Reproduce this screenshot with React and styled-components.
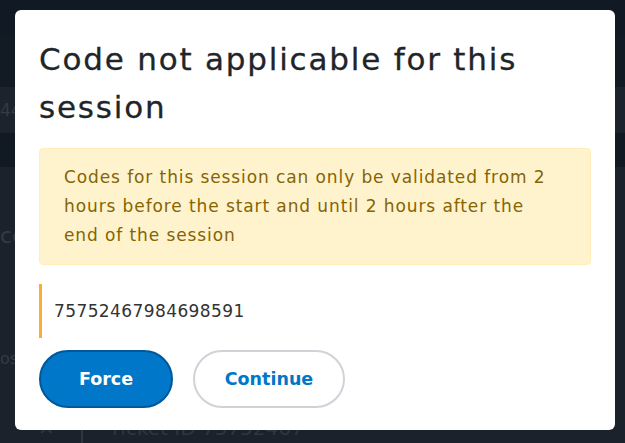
import React from 'react';
import { styled, createGlobalStyle } from 'styled-components';

const Global = createGlobalStyle`
  html, body {
    margin: 0;
    padding: 0;
    background: #1b222c;
    font-family: "DejaVu Sans", "Noto Sans", sans-serif;
  }
`;

const Page = styled.div`
  position: relative;
  width: 625px;
  height: 443px;
  overflow: hidden;
  background: #1b222c;
`;

const Band = styled.div`
  height: ${p => p.h}px;
  background: ${p => p.bg};
  display: flex;
  align-items: center;
  font-size: ${p => p.fs || 17}px;
  color: #333b45;
`;

const Footer = styled.div`
  display: flex;
  align-items: center;
  gap: 26px;
  padding-left: 38px;
  height: 30px;
  color: #2e3641;
  font-size: 20px;
`;

const Divider = styled.div`
  width: 2px;
  height: 30px;
  background: #2e3641;
`;

const Modal = styled.div`
  position: absolute;
  left: 15px;
  top: 10px;
  width: 600px;
  height: 420px;
  box-sizing: border-box;
  background: #fff;
  border-radius: 6px;
  padding: 25px 24px 0 24px;
  display: flex;
  flex-direction: column;
`;

const Title = styled.h1`
  margin: 0 0 17px 0;
  font-size: 31px;
  line-height: 48px;
  font-weight: 500;
  letter-spacing: 1.8px;
  color: #212529;
  width: 530px;
  -webkit-text-stroke: 0.3px #212529;
`;

const Alert = styled.div`
  background: #fff3cd;
  border: 1px solid #ffeeba;
  border-radius: 4px;
  color: #856404;
  font-size: 17px;
  line-height: 29px;
  letter-spacing: 0.9px;
  padding: 14px 30px 14px 24px;
`;

const CodeField = styled.div`
  margin-top: 19px;
  height: 54px;
  border-left: 3px solid #f6ae35;
  display: flex;
  align-items: center;
  padding-left: 12px;
  font-size: 17px;
  letter-spacing: 0.4px;
  color: #333;
`;

const Actions = styled.div`
  display: flex;
  gap: 20px;
  margin-top: 12px;
`;

const Button = styled.button`
  width: ${p => p.w}px;
  height: 58px;
  box-sizing: border-box;
  padding: 0;
  border-radius: 29px;
  font-family: inherit;
  font-size: 17.5px;
  font-weight: 700;
  border: 2px solid ${p => (p.primary ? '#00589b' : '#cfd3d8')};
  background: ${p => (p.primary ? '#0077c8' : '#fff')};
  color: ${p => (p.primary ? '#fff' : '#0077c8')};
`;

export default function App() {
  return (
    <>
      <Global />
      <Page>
        <Band h={35} bg="#111a24" />
        <Band h={52} bg="#121a23" />
        <Band h={46} bg="#1c232d">44</Band>
        <Band h={34} bg="#111922" />
        <Band h={136} bg="#1b222c" fs={22}>ce</Band>
        <Band h={110} bg="#1b222c" fs={16}>os</Band>
        <Footer>
          <span>✕</span>
          <Divider />
          <span>Ticket ID 75752467</span>
        </Footer>
        <Modal>
          <Title>Code not applicable for this session</Title>
          <Alert>
            Codes for this session can only be validated from 2 hours before the start and until 2 hours after the end of the session
          </Alert>
          <CodeField>75752467984698591</CodeField>
          <Actions>
            <Button primary w={134}>Force</Button>
            <Button w={152}>Continue</Button>
          </Actions>
        </Modal>
      </Page>
    </>
  );
}
